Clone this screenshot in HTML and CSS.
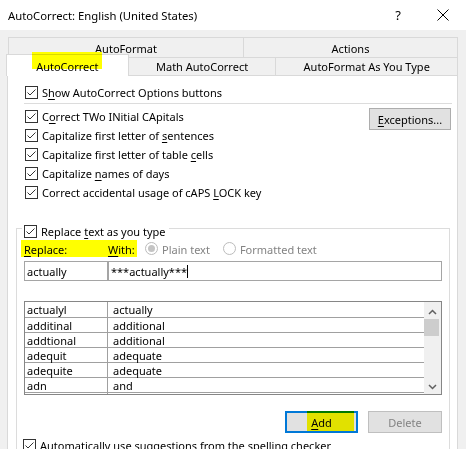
FILE: index.html
```html
<!DOCTYPE html>
<html lang="en">

<head>
    <meta charset="UTF-8">
    <title>AutoCorrect: English (United States)</title>
    <link rel="stylesheet" href="styles.css">
</head>

<body>
    <div class="titlebar">
        <span class="title">AutoCorrect: English (United States)</span>
        <span class="help">?</span>
        <span class="close">
            <svg width="12" height="12" viewBox="0 0 12 12"><path d="M0.5 0.5 L11.5 11.5 M11.5 0.5 L0.5 11.5" stroke="#000" stroke-width="1" fill="none"/></svg>
        </span>
    </div>

    <div class="dialog">
        <div class="tabs">
            <div class="tabrow back">
                <div class="tab t-autoformat">AutoFormat</div>
                <div class="tab t-actions">Actions</div>
            </div>
            <div class="tabrow front">
                <div class="tab t-autocorrect sel"><span class="mark">AutoCorrect</span></div>
                <div class="tab t-math">Math AutoCorrect</div>
                <div class="tab t-asyoutype">AutoFormat As You Type</div>
            </div>
        </div>

        <div class="panel">
            <div class="row">
                <span class="cb"><svg width="13" height="13" viewBox="0 0 13 13"><rect x="0.5" y="0.5" width="12" height="12" fill="#fff" stroke="#333"/><path d="M2.5 6.5 L5 9 L10.5 3.5" stroke="#333" fill="none"/></svg></span>
                <span>S<u>h</u>ow AutoCorrect Options buttons</span>
            </div>
            <div class="sep"></div>

            <div class="options">
                <div class="optlist">
                    <div class="row">
                        <span class="cb"><svg width="13" height="13" viewBox="0 0 13 13"><rect x="0.5" y="0.5" width="12" height="12" fill="#fff" stroke="#333"/><path d="M2.5 6.5 L5 9 L10.5 3.5" stroke="#333" fill="none"/></svg></span>
                        <span>C<u>o</u>rrect TWo INitial CApitals</span>
                    </div>
                    <div class="row">
                        <span class="cb"><svg width="13" height="13" viewBox="0 0 13 13"><rect x="0.5" y="0.5" width="12" height="12" fill="#fff" stroke="#333"/><path d="M2.5 6.5 L5 9 L10.5 3.5" stroke="#333" fill="none"/></svg></span>
                        <span>Capitalize first letter of <u>s</u>entences</span>
                    </div>
                    <div class="row">
                        <span class="cb"><svg width="13" height="13" viewBox="0 0 13 13"><rect x="0.5" y="0.5" width="12" height="12" fill="#fff" stroke="#333"/><path d="M2.5 6.5 L5 9 L10.5 3.5" stroke="#333" fill="none"/></svg></span>
                        <span>Capitalize first letter of table <u>c</u>ells</span>
                    </div>
                    <div class="row">
                        <span class="cb"><svg width="13" height="13" viewBox="0 0 13 13"><rect x="0.5" y="0.5" width="12" height="12" fill="#fff" stroke="#333"/><path d="M2.5 6.5 L5 9 L10.5 3.5" stroke="#333" fill="none"/></svg></span>
                        <span>Capitalize <u>n</u>ames of days</span>
                    </div>
                    <div class="row">
                        <span class="cb"><svg width="13" height="13" viewBox="0 0 13 13"><rect x="0.5" y="0.5" width="12" height="12" fill="#fff" stroke="#333"/><path d="M2.5 6.5 L5 9 L10.5 3.5" stroke="#333" fill="none"/></svg></span>
                        <span>Correct accidental usage of cAPS <u>L</u>OCK key</span>
                    </div>
                </div>
                <button class="btn exceptions"><u>E</u>xceptions...</button>
            </div>

            <div class="group">
                <div class="legend">
                    <span class="cb"><svg width="13" height="13" viewBox="0 0 13 13"><rect x="0.5" y="0.5" width="12" height="12" fill="#fff" stroke="#333"/><path d="M2.5 6.5 L5 9 L10.5 3.5" stroke="#333" fill="none"/></svg></span>
                    <span class="ltext">Replace <u>t</u>ext as you type</span>
                </div>

                <div class="labels">
                    <span class="mark2">
                        <span class="lbl-replace"><u>R</u>eplace:</span><span class="lbl-with"><u>W</u>ith:</span>
                    </span>
                    <span class="radio on"><span class="dot"></span></span>
                    <span class="radiotext">Plain text</span>
                    <span class="radio off"></span>
                    <span class="radiotext">Formatted text</span>
                </div>

                <div class="inputs">
                    <div class="field f-replace">actually</div>
                    <div class="field f-with">***actually***<span class="caret"></span></div>
                </div>

                <div class="list">
                    <div class="rows">
                        <div class="item"><span class="c1">actualyl</span><span class="c2">actually</span></div>
                        <div class="item"><span class="c1">additinal</span><span class="c2">additional</span></div>
                        <div class="item"><span class="c1">addtional</span><span class="c2">additional</span></div>
                        <div class="item"><span class="c1">adequit</span><span class="c2">adequate</span></div>
                        <div class="item"><span class="c1">adequite</span><span class="c2">adequate</span></div>
                        <div class="item"><span class="c1">adn</span><span class="c2">and</span></div>
                        <div class="item"><span class="c1">advanage</span><span class="c2">advantage</span></div>
                    </div>
                    <div class="scrollbar">
                        <svg class="arrow" width="9" height="6" viewBox="0 0 9 6"><path d="M1 5 L4.5 1.5 L8 5" stroke="#606060" stroke-width="1.5" fill="none"/></svg>
                        <div class="track"><div class="thumb"></div></div>
                        <svg class="arrow" width="9" height="6" viewBox="0 0 9 6"><path d="M1 1 L4.5 4.5 L8 1" stroke="#606060" stroke-width="1.5" fill="none"/></svg>
                    </div>
                </div>

                <div class="buttons">
                    <button class="btn add"><span class="mark3"><u>A</u>dd</span></button>
                    <button class="btn delete">Delete</button>
                </div>

                <div class="row">
                    <span class="cb"><svg width="13" height="13" viewBox="0 0 13 13"><rect x="0.5" y="0.5" width="12" height="12" fill="#fff" stroke="#333"/><path d="M2.5 6.5 L5 9 L10.5 3.5" stroke="#333" fill="none"/></svg></span>
                    <span>Automatically use suggestions from the spelling checker</span>
                </div>
            </div>
        </div>
    </div>
</body>

</html>
```

FILE: styles.css
```css
html,
body {
    margin: 0;
    padding: 0;
}

body {
    width: 466px;
    height: 449px;
    overflow: hidden;
    background: #f0f0f0;
    font-family: "Noto Sans", "Open Sans", sans-serif;
    font-size: 11px;
    color: #000;
}

u {
    text-decoration-thickness: 1px;
    text-underline-offset: 2px;
}

/* title bar */
.titlebar {
    height: 30px;
    background: #fff;
    display: flex;
    align-items: center;
}

.title {
    padding-left: 8px;
    font-size: 11.3px;
    flex: 1;
}

.help {
    width: 20px;
    text-align: center;
    font-size: 13px;
    margin-right: 29px;
}

.close {
    width: 12px;
    height: 12px;
    margin-right: 17px;
    display: flex;
}

/* tabs */
.dialog {
    padding-top: 7px;
}

.tabs {
    margin-left: 7px;
    width: 451px;
}

.tabrow {
    display: flex;
}

.tabrow.back {
    margin-left: 1px;
    height: 20px;
}

.tabrow.front {
    height: 18px;
    align-items: flex-end;
}

.tab {
    box-sizing: border-box;
    border: 1px solid #d9d9d9;
    border-bottom: none;
    display: flex;
    align-items: center;
    justify-content: center;
    background: #f0f0f0;
}

.tabrow.back .tab {
    height: 20px;
    padding-top: 2px;
}

.tabrow.front .tab {
    height: 18px;
}

.t-autoformat {
    width: 236px;
}

.t-actions {
    width: 214px;
    border-left: none;
}

.t-autocorrect {
    width: 123px;
}

.tab.sel {
    position: relative;
    z-index: 1;
    height: 22px !important;
    margin-left: -1px;
    margin-bottom: -1px;
    background: #fff;
    padding-top: 1px;
}

.t-math {
    width: 148px;
    border-left: none;
}

.t-asyoutype {
    width: 182px;
    border-left: none;
}

/* yellow marker */
.mark,
.mark3 {
    position: relative;
}

.mark::before {
    content: "";
    position: absolute;
    left: -4px;
    right: -3px;
    top: -7px;
    bottom: 5px;
    background: #ffff00;
    mix-blend-mode: multiply;
}

/* panel */
.panel {
    box-sizing: border-box;
    margin-left: 7px;
    width: 451px;
    height: 400px;
    background: #fff;
    border: 1px solid #d9d9d9;
    padding-top: 7px;
}

.row {
    display: flex;
    align-items: center;
    height: 19px;
    padding-left: 17px;
}

.cb {
    width: 13px;
    height: 13px;
    margin-right: 4px;
    display: flex;
}

.sep {
    margin: 1px 5px 0 16px;
    height: 1px;
    background: #dcdcdc;
}

.options {
    display: flex;
    justify-content: space-between;
    margin-top: 3px;
}

.btn {
    box-sizing: border-box;
    font-family: inherit;
    font-size: 11px;
    background: #e1e1e1;
    border: 1px solid #adadad;
    height: 22px;
    padding: 0;
    color: #000;
}

.exceptions {
    width: 82px;
    margin-top: 1px;
    margin-right: 6px;
}

/* replace group */
.group {
    margin: 26px 7px 0 8px;
    border: 1px solid #dcdcdc;
    border-bottom: none;
    height: 300px;
}

.legend {
    box-sizing: border-box;
    display: flex;
    align-items: center;
    width: max-content;
    height: 19px;
    margin: -8px 0 0 5px;
    padding: 1px 3px 0 2px;
    background: #fff;
}

.ltext {
    padding-top: 1px;
}

.labels {
    display: flex;
    align-items: center;
    height: 17px;
    padding-left: 4px;
}

.mark2 {
    display: flex;
    align-items: center;
    height: 17px;
    background: #ffff00;
}

.lbl-replace,
.lbl-with,
.radiotext {
    padding-top: 2px;
}

.lbl-replace {
    width: 84px;
    padding-left: 3px;
}

.lbl-with {
    width: 29px;
}

.radio {
    box-sizing: border-box;
    width: 13px;
    height: 13px;
    border: 1px solid #bcbcbc;
    border-radius: 50%;
    background: #fff;
    display: flex;
    align-items: center;
    justify-content: center;
}

.radio.on {
    margin-left: 8px;
}

.dot {
    width: 7px;
    height: 7px;
    border-radius: 50%;
    background: #c4c4c4;
}

.radiotext {
    color: #838383;
    padding-left: 4px;
    margin-right: 13px;
    white-space: nowrap;
}

.inputs {
    display: flex;
    margin: 4px 0 0 7px;
}

.field {
    box-sizing: border-box;
    height: 20px;
    border: 1px solid #a5a5a5;
    padding-left: 2px;
    display: flex;
    align-items: center;
}

.f-replace {
    width: 84px;
}

.f-with {
    width: 334px;
}

.caret {
    width: 1px;
    height: 13px;
    background: #000;
}

/* list */
.list {
    box-sizing: border-box;
    display: flex;
    margin: 20px 0 0 7px;
    width: 418px;
    height: 94px;
    border: 1px solid #868686;
    overflow: hidden;
}

.rows {
    flex: 1;
}

.item {
    display: flex;
    height: 15px;
    border-bottom: 1px solid #a0a0a0;
    box-sizing: border-box;
    align-items: center;
}

.item:first-child {
    height: 16px;
}

.c1 {
    box-sizing: border-box;
    width: 83px;
    height: 100%;
    padding-left: 2px;
    border-right: 1px solid #a0a0a0;
    display: flex;
    align-items: center;
}

.c2 {
    padding-left: 5px;
}

.scrollbar {
    width: 17px;
    background: #f0f0f0;
    display: flex;
    flex-direction: column;
    align-items: center;
}

.arrow {
    margin: 7px 0 4px;
}

.track {
    flex: 1;
    width: 100%;
}

.thumb {
    width: 15px;
    height: 17px;
    background: #cdcdcd;
}

.buttons {
    display: flex;
    justify-content: flex-end;
    gap: 10px;
    margin: 16px 7px 0 0;
}

.add {
    width: 73px;
    border: 2px solid #0078d7;
}

.mark3 {
    display: inline-block;
}

.mark3::before {
    content: "";
    position: absolute;
    left: -4px;
    right: -22px;
    top: -4px;
    bottom: -1px;
    background: #ffff00;
    mix-blend-mode: multiply;
}

.delete {
    width: 74px;
    color: #838383;
    border-color: #bfbfbf;
}

.group .row {
    margin-top: 3px;
    padding-left: 6px;
}
```
